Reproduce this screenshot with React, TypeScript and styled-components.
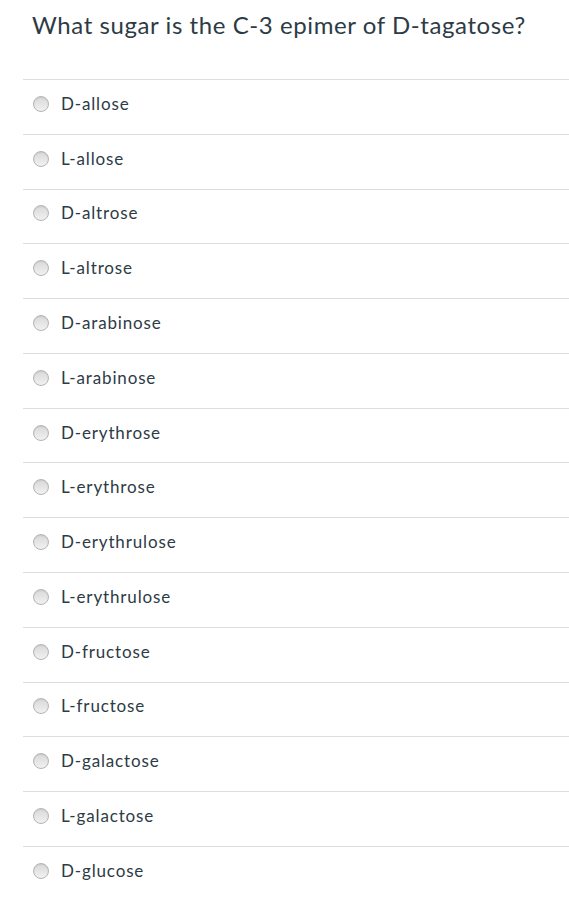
import React from "react";
import styled, { createGlobalStyle } from "styled-components";

const Global = createGlobalStyle`
  html, body { margin: 0; padding: 0; background: #fff; }
  body { font-family: Lato, "Open Sans", sans-serif; color: #2d3b45; }
`;

const Page = styled.div`
  padding: 0 0 0 23px;
`;

const Title = styled.h1`
  margin: 0;
  padding: 9px 0 0 9px;
  height: 79px;
  box-sizing: border-box;
  font-size: 24px;
  font-weight: 400;
  letter-spacing: 0.58px;
  line-height: 32px;
  color: #2d3b45;
`;

const List = styled.div`
  display: flex;
  flex-direction: column;
`;

const Row = styled.label`
  display: flex;
  align-items: center;
  gap: 12px;
  height: 54.79px;
  box-sizing: border-box;
  border-top: 1px solid #dedede;
  padding: 0 0 6px 10px;
  color: #2d3b45;
`;

const Radio = styled.span`
  width: 16px;
  height: 16px;
  box-sizing: border-box;
  border-radius: 50%;
  border: 1px solid #b5b5b5;
  background: linear-gradient(180deg, #d9d9d9 0%, #e6e6e6 55%, #f1f1f1 100%);
  box-shadow: inset 0 1px 1px rgba(0, 0, 0, 0.08);
  flex: none;
`;

const Label = styled.span`
  font-size: 17px;
  letter-spacing: 0.85px;
  line-height: 24px;
`;

const options = [
  "D-allose",
  "L-allose",
  "D-altrose",
  "L-altrose",
  "D-arabinose",
  "L-arabinose",
  "D-erythrose",
  "L-erythrose",
  "D-erythrulose",
  "L-erythrulose",
  "D-fructose",
  "L-fructose",
  "D-galactose",
  "L-galactose",
  "D-glucose",
];

export default function App() {
  return (
    <>
      <Global />
      <Page>
        <Title>What sugar is the C-3 epimer of D-tagatose?</Title>
        <List>
          {options.map((o) => (
            <Row key={o}>
              <Radio />
              <Label>{o}</Label>
            </Row>
          ))}
        </List>
      </Page>
    </>
  );
}
